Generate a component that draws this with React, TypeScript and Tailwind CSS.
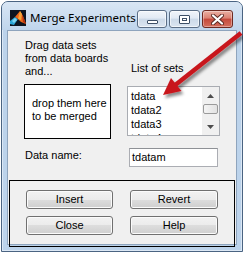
import React from "react";

function Btn({ label }: { label: string }) {
  return (
    <div className="h-[19px] flex items-center justify-center rounded-[3px] border border-[#707070] bg-[linear-gradient(#f2f2f2_0%,#ebebeb_50%,#dddddd_50%,#cfcfcf_100%)] shadow-[inset_0_0_0_1px_#fbfbfb] text-[11px] leading-none text-black">
      {label}
    </div>
  );
}

function MatlabIcon() {
  return (
    <svg width="16" height="16" viewBox="0 0 16 16">
      <rect x="0" y="0" width="16" height="16" fill="#0b1420" />
      <polygon points="0,11 5,7 8,9 4,15 0,14" fill="#2aa6d8" />
      <polygon points="2,11 5,8 7,10 4,13" fill="#7fd3f0" />
      <polygon points="5,7 10,1 13,6 16,14 11,12 8,9" fill="#e8651a" />
      <polygon points="10,1 12,4 11,10 8,9" fill="#f5a43a" />
      <polygon points="12,4 16,14 13,12" fill="#b3310f" />
    </svg>
  );
}

export default function App() {
  return (
    <div className="relative w-[243px] h-[253px] bg-white overflow-hidden font-['Liberation_Sans',Arial,sans-serif] text-black">
      <div className="ml-px mt-px w-[242px] h-[251px] rounded-t-[7px] border border-[#4a6482] bg-[#bcd3eb] flex flex-col shadow-[inset_0_0_0_1px_#dce8f5]">
        {/* title bar */}
        <div className="h-[28px] flex items-start rounded-t-[6px] bg-[linear-gradient(#d9e6f4,#bfd5ec)]">
          <div className="ml-[8px] mt-[8px] shrink-0">
            <MatlabIcon />
          </div>
          <div className="ml-[4px] mt-[8px] shrink-0 whitespace-nowrap text-[11.5px] leading-[16px] font-['Noto_Sans',sans-serif] text-black">
            Merge Experiments
          </div>
          <div className="ml-auto mr-[9px] mt-[8px] flex gap-[2px] shrink-0">
            <div className="w-[30px] h-[18px] rounded-[3px] border border-[#5b6e86] bg-[linear-gradient(#f1f5fa_0%,#e2eaf4_45%,#ccd9e8_50%,#dbe5f1_100%)] shadow-[inset_0_0_0_1px_rgba(255,255,255,0.6)] flex items-center justify-center">
              <div className="w-[11px] h-[4px] mt-[5px] border border-[#3d4f66] bg-white rounded-[1px]" />
            </div>
            <div className="w-[31px] h-[18px] rounded-[3px] border border-[#5b6e86] bg-[linear-gradient(#f1f5fa_0%,#e2eaf4_45%,#ccd9e8_50%,#dbe5f1_100%)] shadow-[inset_0_0_0_1px_rgba(255,255,255,0.6)] flex items-center justify-center">
              <div className="w-[11px] h-[9px] border border-[#3d4f66] bg-white rounded-[1px] flex items-center justify-center">
                <div className="w-[5px] h-[3px] mt-[1px] border border-[#3d4f66]" />
              </div>
            </div>
            <div className="w-[31px] h-[18px] rounded-[3px] border border-[#6e2a22] bg-[linear-gradient(#eab0a3_0%,#dc8172_45%,#c4493b_50%,#d46e5d_100%)] shadow-[inset_0_0_0_1px_rgba(255,255,255,0.35)] flex items-center justify-center">
              <svg width="13" height="11" viewBox="0 0 13 11">
                <path d="M2 1.5 L11 9.5 M11 1.5 L2 9.5" stroke="#5a2a24" strokeWidth="4" strokeLinecap="round" />
                <path d="M2 1.5 L11 9.5 M11 1.5 L2 9.5" stroke="#ffffff" strokeWidth="2.2" strokeLinecap="round" />
              </svg>
            </div>
          </div>
        </div>

        {/* client */}
        <div className="mx-[5px] h-[215px] border border-[#8ea4bd] bg-[#f0f0f0] text-[11px] leading-[13px]">
          <div className="flex pl-[16px]">
            <div className="w-[87px] flex flex-col">
              <div className="mt-[8px] pl-[1px]">
                <div>Drag data sets</div>
                <div>from data boards</div>
                <div>and...</div>
              </div>
              <div className="mt-[6px] h-[55px] border border-black bg-white pl-[7px] pt-[12px]">
                <div>drop them here</div>
                <div>to be merged</div>
              </div>
            </div>
            <div className="ml-[16px] w-[93px] flex flex-col">
              <div className="mt-[31px] pl-[4px]">List of sets</div>
              <div className="mt-[11px] h-[50px] border border-[#a9acb2] bg-white flex overflow-hidden">
                <div className="flex-1 pl-[3px] pt-[2px] leading-[14px]">
                  <div>tdata</div>
                  <div>tdata2</div>
                  <div>tdata3</div>
                  <div>tdata4</div>
                </div>
                <div className="w-[17px] bg-[#f0f0f0] flex flex-col items-center">
                  <div className="h-[17px] flex items-center justify-center">
                    <svg width="7" height="4" viewBox="0 0 7 4">
                      <polygon points="0,4 3.5,0 7,4" fill="#4d4d4d" />
                    </svg>
                  </div>
                  <div className="w-[15px] h-[10px] rounded-[2px] border border-[#9a9a9a] bg-[linear-gradient(90deg,#f4f4f4,#e2e2e2)]" />
                  <div className="flex-1" />
                  <div className="h-[17px] flex items-center justify-center">
                    <svg width="7" height="4" viewBox="0 0 7 4">
                      <polygon points="0,0 7,0 3.5,4" fill="#4d4d4d" />
                    </svg>
                  </div>
                </div>
              </div>
            </div>
          </div>

          <div className="mt-[9px] pl-[17px] flex items-start">
            <div className="w-[104px] mt-[1px]">Data name:</div>
            <div className="w-[89px] h-[19px] border border-[#abadb3] border-t-[#8e9196] bg-white pl-[2px] flex items-center">
              tdatam
            </div>
          </div>

          <div className="mt-[13px] ml-[1px] w-[226px] h-[67px] border border-black">
            <div className="grid grid-cols-[87px_88px] gap-x-[17px] gap-y-[7px] pt-[9px] pl-[16px]">
              <Btn label="Insert" />
              <Btn label="Revert" />
              <Btn label="Close" />
              <Btn label="Help" />
            </div>
          </div>
        </div>
      </div>

      {/* red arrow annotation */}
      <svg className="absolute left-0 top-0 pointer-events-none" width="243" height="253" viewBox="0 0 243 253">
        <defs>
          <filter id="sh" x="-20%" y="-20%" width="140%" height="140%">
            <feDropShadow dx="2" dy="3" stdDeviation="1.6" floodColor="#000" floodOpacity="0.45" />
          </filter>
        </defs>
        <g filter="url(#sh)">
          <line x1="241" y1="33" x2="174" y2="86" stroke="#c8161d" strokeWidth="4.5" />
          <polygon points="163,95 181.5,91 171,78" fill="#c8161d" />
        </g>
      </svg>
    </div>
  );
}
